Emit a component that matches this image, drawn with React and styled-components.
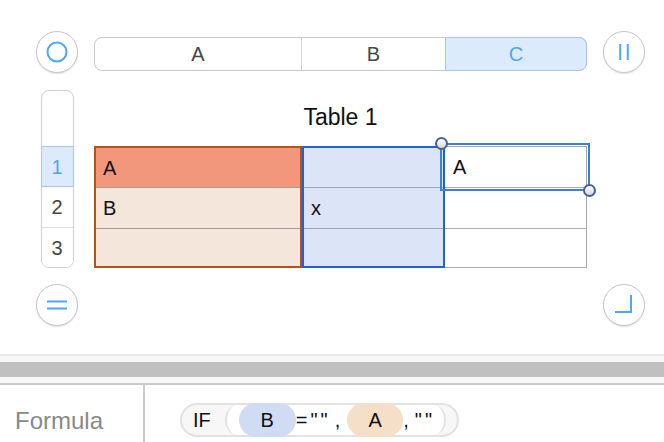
import React from 'react';
import styled, { createGlobalStyle } from 'styled-components';

const Global = createGlobalStyle`
  html, body { margin: 0; padding: 0; background: #fff; }
  body {
    width: 664px; height: 442px; overflow: hidden;
    font-family: "Liberation Sans", Arial, Helvetica, sans-serif;
  }
  * { box-sizing: border-box; }
`;

const Page = styled.div`
  width: 664px;
  height: 442px;
  display: flex;
  flex-direction: column;
  overflow: hidden;
`;

const Canvas = styled.div`
  height: 354px;
  flex: none;
  padding: 31px 0 0 36px;
  display: grid;
  grid-template-columns: 42px 493px 42px;
  grid-template-rows: 43px 178px 42px;
  column-gap: 16px;
  row-gap: 16px;
  background: #fff;
`;

const RoundButton = styled.button`
  width: 42px;
  height: 42px;
  padding: 0;
  border-radius: 50%;
  border: 1.5px solid #c7c7c7;
  background: #fff;
  box-shadow: 0 1px 1.5px rgba(0, 0, 0, 0.12);
  display: flex;
  align-items: center;
  justify-content: center;
  align-self: start;
`;

const Segments = styled.div`
  align-self: start;
  margin-top: 6px;
  height: 34px;
  display: grid;
  grid-template-columns: 206px 144px 1fr;
  border: 1px solid #c9c9c9;
  border-radius: 8px;
  background: #fff;
`;

const Segment = styled.div`
  display: flex;
  align-items: center;
  justify-content: center;
  font-size: 20px;
  color: ${p => (p.$active ? '#4fa6f4' : '#464646')};
  background: ${p => (p.$active ? '#dcebfb' : 'transparent')};
  border-radius: ${p => (p.$active ? '0 8px 8px 0' : p.$first ? '7px 0 0 7px' : '0')};
  border-left: ${p => (p.$first ? 'none' : p.$active ? '1px solid #a9c7e9' : '1px solid #d2d2d2')};
  ${p => p.$active && `
    margin: -1px -1px -1px 0;
    border-top: 1px solid #a9c7e9;
    border-right: 1px solid #a9c7e9;
    border-bottom: 1px solid #a9c7e9;
  `}
`;

const RowHeader = styled.div`
  width: 33px;
  justify-self: center;
  border: 1px solid #cfcfcf;
  border-radius: 8px;
  display: flex;
  flex-direction: column;
  background: #fff;
`;

const RowHeaderSpacer = styled.div`
  height: 55px;
  flex: none;
`;

const RowNum = styled.div`
  flex: ${p => (p.$last ? '1' : `0 0 ${p.$h}px`)};
  display: flex;
  align-items: center;
  justify-content: center;
  font-size: 20px;
  line-height: 20px;
  color: ${p => (p.$selected ? '#4fa6f4' : '#444')};
  background: ${p => (p.$selected ? '#dcebfb' : '#fff')};
  ${p => p.$selected ? `
    margin: 0 -1px;
    border: 1px solid #a9c7e9;
  ` : ''}
  ${p => p.$divider ? 'border-bottom: 1px solid #dddddd;' : ''}
  ${p => p.$last ? 'border-radius: 0 0 7px 7px;' : ''}
`;

const TableArea = styled.div`
  display: flex;
  flex-direction: column;
`;

const Title = styled.div`
  height: 56px;
  flex: none;
  padding-top: 16px;
  text-align: center;
  font-size: 23px;
  line-height: 23px;
  color: #111;
`;

const Table = styled.div`
  position: relative;
  height: 122px;
  display: grid;
  grid-template-columns: 208px 143px 142px;
`;

const tones = {
  red: { border: '2px solid #b4541c', bg: '#f5e6dc', head: '#f3977c', line: '#a59c96', bw: 2 },
  blue: { border: '2px solid #2160d8', bg: '#dce5f8', head: '#dce5f8', line: '#9ea4b4', bw: 2 },
  plain: { border: '1px solid #a9a9a9', bg: '#fff', head: '#fff', line: '#adadad', bw: 1 },
};

const Column = styled.div`
  display: flex;
  flex-direction: column;
  border-top: ${p => tones[p.$tone].border};
  border-bottom: ${p => tones[p.$tone].border};
  border-right: ${p => tones[p.$tone].border};
  border-left: ${p => (p.$tone === 'plain' ? 'none' : tones[p.$tone].border)};
  background: ${p => tones[p.$tone].bg};
`;

const Cell = styled.div`
  flex: ${p => (p.$row === 3 ? '1' : `0 0 ${p.$row === 1 ? 41 - tones[p.$tone].bw : 41}px`)};
  display: flex;
  align-items: center;
  padding-left: ${p => (p.$tone === 'plain' ? 8 : 7)}px;
  font-size: 20px;
  line-height: 20px;
  color: #111;
  background: ${p => (p.$row === 1 ? tones[p.$tone].head : 'transparent')};
  border-top: ${p => (p.$row === 1 ? 'none' : `1px solid ${tones[p.$tone].line}`)};
`;

const Selection = styled.div`
  position: absolute;
  left: 346px;
  top: -3px;
  width: 150px;
  height: 48px;
  border: 2px solid #3a82d3;
  pointer-events: none;
`;

const Handle = styled.span`
  position: absolute;
  width: 13px;
  height: 13px;
  border-radius: 50%;
  border: 2px solid #4a6191;
  background: linear-gradient(#ffffff, #d8d8d8);
  ${p => (p.$corner === 'tl' ? 'left: -7px; top: -8px;' : 'right: -8px; bottom: -8px;')}
`;

const Splitter = styled.div`
  flex: none;
  height: 31px;
  padding: 6px 0;
  background: #f7f7f7;
  border-top: 2px solid #e6e6e6;
  border-bottom: 2px solid #cacaca;
`;

const Grip = styled.div`
  height: 15px;
  background: #c0c0c0;
`;

const FormulaBar = styled.div`
  flex: 1;
  display: grid;
  grid-template-columns: 145px 1fr;
`;

const FormulaLabel = styled.div`
  border-right: 2px solid #cacaca;
  padding: 19px 0 0 15px;
  font-size: 24px;
  line-height: 34px;
  color: #898989;
`;

const FormulaBody = styled.div`
  padding: 18px 0 0 35px;
  display: flex;
  align-items: flex-start;
`;

const FnToken = styled.div`
  display: flex;
  align-items: center;
  height: 34px;
  border: 2px solid #e2e2e2;
  border-radius: 17px;
  background: #f7f7f7;
  padding-right: 11px;
  font-size: 20px;
  line-height: 20px;
  color: #111;
`;

const FnName = styled.span`
  padding: 0 14px 0 11px;
`;

const Args = styled.div`
  align-self: stretch;
  display: flex;
  align-items: center;
  background: #fff;
  border-left: 2px solid #e2e2e2;
  border-right: 2px solid #e2e2e2;
  border-radius: 12px / 15px;
  padding: 0 9px 0 12px;
`;

const RefToken = styled.span`
  flex: none;
  width: ${p => p.$w}px;
  height: 34px;
  margin-left: ${p => p.$ml || 0}px;
  display: flex;
  align-items: center;
  justify-content: center;
  border-radius: 17px;
  background: ${p => (p.$kind === 'b' ? '#cfdcf3' : '#f6dfc8')};
`;

const Punct = styled.span`
  margin-left: ${p => p.$ml || 0}px;
  letter-spacing: ${p => p.$ls || 0}px;
  white-space: pre;
`;

const BLUE = '#4da7f5';

const CircleIcon = () => (
  <svg width="24" height="24" viewBox="0 0 24 24">
    <circle cx="12" cy="12" r="9.5" fill="none" stroke={BLUE} strokeWidth="2" />
  </svg>
);

const PauseIcon = () => (
  <svg width="24" height="24" viewBox="0 0 24 24">
    <line x1="8.2" y1="4" x2="8.2" y2="20" stroke={BLUE} strokeWidth="2" />
    <line x1="15.8" y1="4" x2="15.8" y2="20" stroke={BLUE} strokeWidth="2" />
  </svg>
);

const EqualIcon = () => (
  <svg width="24" height="24" viewBox="0 0 24 24">
    <line x1="2" y1="8.5" x2="22" y2="8.5" stroke={BLUE} strokeWidth="2" />
    <line x1="2" y1="15.5" x2="22" y2="15.5" stroke={BLUE} strokeWidth="2" />
  </svg>
);

const CornerIcon = () => (
  <svg width="24" height="24" viewBox="0 0 24 24">
    <polyline points="3,19 19,19 19,2" fill="none" stroke={BLUE} strokeWidth="2" />
  </svg>
);

const columns = [
  { tone: 'red', cells: ['A', 'B', ''] },
  { tone: 'blue', cells: ['', 'x', ''] },
  { tone: 'plain', cells: ['A', '', ''] },
];

export default function App() {
  return (
    <Page>
      <Global />
      <Canvas>
        <RoundButton aria-label="circle"><CircleIcon /></RoundButton>
        <Segments>
          <Segment $first>A</Segment>
          <Segment>B</Segment>
          <Segment $active>C</Segment>
        </Segments>
        <RoundButton aria-label="pause"><PauseIcon /></RoundButton>

        <RowHeader>
          <RowHeaderSpacer />
          <RowNum $selected $h={41}>1</RowNum>
          <RowNum $divider $h={41}>2</RowNum>
          <RowNum $last>3</RowNum>
        </RowHeader>
        <TableArea>
          <Title>Table 1</Title>
          <Table>
            {columns.map((col, ci) => (
              <Column key={ci} $tone={col.tone}>
                {col.cells.map((txt, ri) => (
                  <Cell key={ri} $tone={col.tone} $row={ri + 1}>{txt}</Cell>
                ))}
              </Column>
            ))}
            <Selection>
              <Handle $corner="tl" />
              <Handle $corner="br" />
            </Selection>
          </Table>
        </TableArea>
        <div />

        <RoundButton aria-label="equal"><EqualIcon /></RoundButton>
        <div />
        <RoundButton aria-label="corner"><CornerIcon /></RoundButton>
      </Canvas>
      <Splitter><Grip /></Splitter>
      <FormulaBar>
        <FormulaLabel>Formula</FormulaLabel>
        <FormulaBody>
          <FnToken>
            <FnName>IF</FnName>
            <Args>
              <RefToken $kind="b" $w={57}>B</RefToken>
              <Punct>=</Punct>
              <Punct $ml={3} $ls={3}>""</Punct>
              <Punct $ml={4}>,</Punct>
              <RefToken $kind="a" $w={56} $ml={7}>A</RefToken>
              <Punct>,</Punct>
              <Punct $ml={6} $ls={3}>""</Punct>
            </Args>
          </FnToken>
        </FormulaBody>
      </FormulaBar>
    </Page>
  );
}
